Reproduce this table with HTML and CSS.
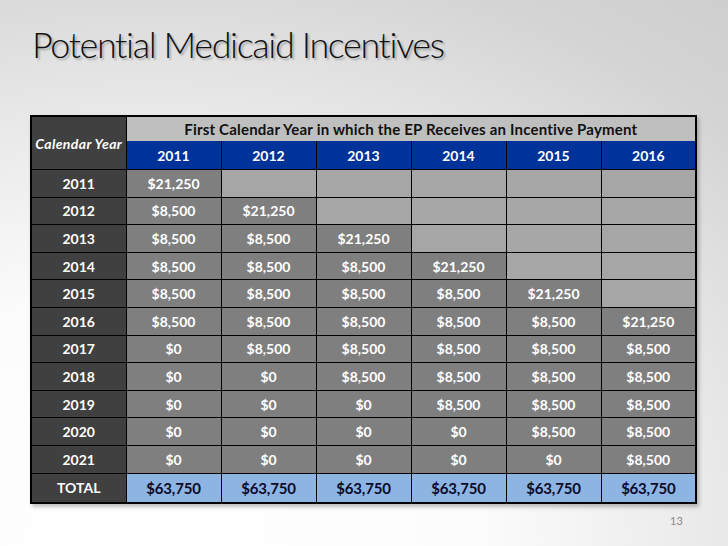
FILE: index.html
```html
<!DOCTYPE html>
<html>
<head>
<meta charset="utf-8">
<link rel="stylesheet" href="styles.css">
</head>
<body>
<div class="slide">
  <h1 class="title">Potential Medicaid Incentives</h1>
  <table class="grid">
    <colgroup>
      <col class="c"><col class="c"><col class="c"><col class="c"><col class="c"><col class="c"><col class="c">
    </colgroup>
    <thead>
      <tr class="h1row">
        <th class="cy" rowspan="2">Calendar Year</th>
        <th class="span" colspan="6">First Calendar Year in which the EP Receives an Incentive Payment</th>
      </tr>
      <tr class="h2row">
        <th class="yr">2011</th><th class="yr">2012</th><th class="yr">2013</th><th class="yr">2014</th><th class="yr">2015</th><th class="yr">2016</th>
      </tr>
    </thead>
    <tbody>
      <tr><th>2011</th><td>$21,250</td><td class="e"></td><td class="e"></td><td class="e"></td><td class="e"></td><td class="e"></td></tr>
      <tr><th>2012</th><td>$8,500</td><td>$21,250</td><td class="e"></td><td class="e"></td><td class="e"></td><td class="e"></td></tr>
      <tr><th>2013</th><td>$8,500</td><td>$8,500</td><td>$21,250</td><td class="e"></td><td class="e"></td><td class="e"></td></tr>
      <tr><th>2014</th><td>$8,500</td><td>$8,500</td><td>$8,500</td><td>$21,250</td><td class="e"></td><td class="e"></td></tr>
      <tr><th>2015</th><td>$8,500</td><td>$8,500</td><td>$8,500</td><td>$8,500</td><td>$21,250</td><td class="e"></td></tr>
      <tr><th>2016</th><td>$8,500</td><td>$8,500</td><td>$8,500</td><td>$8,500</td><td>$8,500</td><td>$21,250</td></tr>
      <tr><th>2017</th><td>$0</td><td>$8,500</td><td>$8,500</td><td>$8,500</td><td>$8,500</td><td>$8,500</td></tr>
      <tr><th>2018</th><td>$0</td><td>$0</td><td>$8,500</td><td>$8,500</td><td>$8,500</td><td>$8,500</td></tr>
      <tr><th>2019</th><td>$0</td><td>$0</td><td>$0</td><td>$8,500</td><td>$8,500</td><td>$8,500</td></tr>
      <tr><th>2020</th><td>$0</td><td>$0</td><td>$0</td><td>$0</td><td>$8,500</td><td>$8,500</td></tr>
      <tr><th>2021</th><td>$0</td><td>$0</td><td>$0</td><td>$0</td><td>$0</td><td>$8,500</td></tr>
      <tr class="total"><th>TOTAL</th><td>$63,750</td><td>$63,750</td><td>$63,750</td><td>$63,750</td><td>$63,750</td><td>$63,750</td></tr>
    </tbody>
  </table>
  <div class="pagenum">13</div>
</div>
</body>
</html>
```
FILE: styles.css
```css
html, body {
  margin: 0;
  padding: 0;
}
body {
  width: 728px;
  height: 546px;
  overflow: hidden;
}
.slide {
  width: 728px;
  height: 546px;
  box-sizing: border-box;
  padding: 22px 0 0 30px;
  background: radial-gradient(ellipse 130% 130% at 20% 100%, #ffffff 0%, #fcfcfc 35%, #e8e8e8 62%, #d4d4d4 85%, #cecece 100%);
  position: relative;
}
.title {
  margin: 0 0 0 2px;
  font-family: "Lato", "DejaVu Sans", sans-serif;
  font-weight: 300;
  font-variant-ligatures: none;
  font-size: 36px;
  letter-spacing: -1.4px;
  line-height: 44px;
  color: #111;
  text-shadow: 2px 2px 2px rgba(0,0,0,0.25);
  height: 93px;
}
.grid {
  border-collapse: collapse;
  table-layout: fixed;
  width: 667px;
  border: 2px solid #000;
  box-shadow: 2px 3px 4px rgba(0,0,0,0.25);
  font-family: "Lato", "Liberation Sans", sans-serif;
  font-weight: bold;
  font-size: 14px;
  color: #fff;
}
.grid col.c {
  width: 95px;
}
.grid th, .grid td {
  padding: 0;
  text-align: center;
  border: 1px solid #000;
  height: 26.6px;
  white-space: nowrap;
}
.grid tbody th {
  background: #404040;
}
.grid td {
  background: #7f7f7f;
}
.grid td.e {
  background: #a6a6a6;
}
.cy {
  background: #404040;
  font-style: italic;
  font-size: 14px;
  letter-spacing: 0.4px;
}
.h1row th.span {
  background: #bfbfbf;
  color: #111;
  font-size: 15px;
  letter-spacing: 0.2px;
  height: 24px;
  border-bottom: none;
}
.h2row th.yr {
  background: #003399;
  height: 28px;
  border-top: none;
}
.total td {
  background: #8db4e2;
  color: #0b0b2a;
  font-size: 15px;
  letter-spacing: -0.2px;
  height: 28px;
}
.total th {
  height: 28px;
}
.pagenum {
  position: absolute;
  left: 670px;
  top: 514px;
  font-family: "Lato", "Liberation Sans", sans-serif;
  font-size: 11px;
  color: #8a8a8a;
}
```
